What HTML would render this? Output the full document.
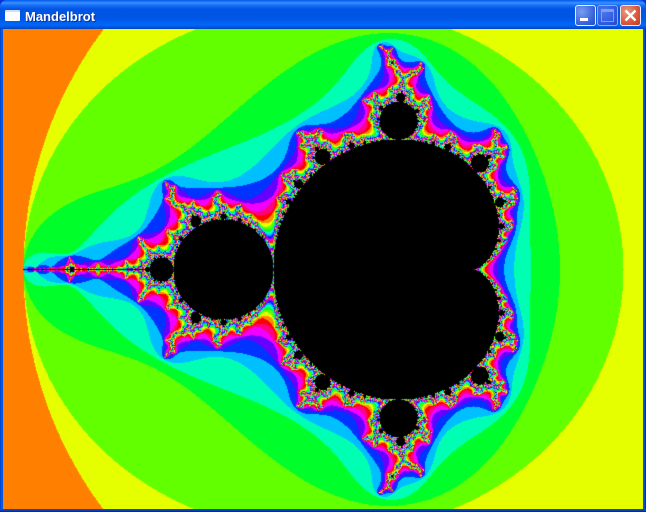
<!DOCTYPE html>
<html>
<head>
<meta charset="utf-8">
<title>Mandelbrot</title>
<style>
html,body{margin:0;padding:0;background:#0831d9;}
#win{position:relative;width:646px;height:512px;overflow:hidden;background:#0831d9;}
#tb{position:absolute;left:0;top:0;width:646px;height:29px;border-radius:7px 7px 0 0;
background:linear-gradient(to bottom,#0058ee 0,#3a93ff 3px,#1a70f5 5px,#0055e5 9px,#0055e5 18px,#0062f5 23px,#0068f8 25px,#0058e0 27px,#0043b8 29px);}
#cv{position:absolute;left:3px;top:29px;width:640px;height:480px;background:#ff8000;display:block;}
#l{position:absolute;left:0;top:29px;width:3px;height:483px;background:linear-gradient(to right,#0040c0,#0a5cf0,#0a50e0);}
#r{position:absolute;right:0;top:29px;width:3px;height:483px;background:linear-gradient(to right,#0a50e0,#0850d8,#002090);}
#b{position:absolute;left:0;top:509px;width:646px;height:3px;background:linear-gradient(to bottom,#0a50e0,#0840c8,#002090);}
#icon{position:absolute;left:5px;top:10px;background:#fff;border-top:2px solid #cfe0ff;box-sizing:border-box;border-radius:1px;width:15px;height:11px;}
#t{position:absolute;left:25px;top:9px;font:bold 13px/15px "Liberation Sans",sans-serif;color:#fff;text-shadow:1px 1px 0 #0a2f9a;white-space:pre;}
.btn{position:absolute;top:5px;width:21px;height:21px;box-sizing:border-box;border:1px solid #e8eeff;border-radius:3px;}
#min{left:575px;background:radial-gradient(circle at 30% 30%,#7a9cf0,#3d68dc 60%,#2448c0);}
#max{left:597px;background:radial-gradient(circle at 30% 30%,#4a78ea,#2f5ce0 60%,#2248c8);border-color:#8fa8ee;}
#cls{left:620px;background:radial-gradient(circle at 30% 30%,#eb9a80,#d8563a 60%,#c03c1c);}
#min i{position:absolute;left:4px;top:12px;width:8px;height:3px;background:#fff;}
#max i{position:absolute;left:3px;top:3px;width:13px;height:13px;box-sizing:border-box;border:1px solid #7f9cf0;border-top:3px solid #7f9cf0;}
#cls svg{position:absolute;left:0;top:0;}
</style>
</head>
<body>
<div id="win">
<div id="tb"></div>
<div id="icon"></div>
<div id="t">Mandelbrot</div>
<div class="btn" id="min"><i></i></div>
<div class="btn" id="max"><i></i></div>
<div class="btn" id="cls"><svg width="19" height="19" viewBox="0 0 19 19"><path d="M4.5 4.5L14.5 14.5M14.5 4.5L4.5 14.5" stroke="#fff" stroke-width="2.4" fill="none"/></svg></div>
<div id="l"></div><div id="r"></div><div id="b"></div>
<canvas id="cv" width="640" height="480"></canvas>
</div>
<script>
(function(){
var c=document.getElementById('cv').getContext('2d');
var im=c.createImageData(640,480),d=im.data;
var MAX=1000;
var H=[30,66,97,130,162,195,228,264,297,330];
function hsv(h){h=((h%360)+360)%360;var s=h/60,i=Math.floor(s),f=s-i,q=255*(1-f),t=255*f;
switch(i){case 0:return[255,t,0];case 1:return[q,255,0];case 2:return[0,255,t];case 3:return[0,q,255];case 4:return[t,0,255];default:return[255,0,q];}}
for(var y=0;y<480;y++){var ci=1.2-y*0.005;
for(var x=0;x<640;x++){var cr=-2.1+x*0.005,zr=0,zi=0,n=0;
while(n<MAX&&zr*zr+zi*zi<=4){var tmp=zr*zr-zi*zi+cr;zi=2*zr*zi+ci;zr=tmp;n++;}
var col;
if(n>=MAX)col=[0,0,0];
else if(n<=10)col=hsv(H[n-1]);
else col=hsv(30+(n-1)*33);
var p=(y*640+x)*4;
d[p]=col[0];d[p+1]=col[1];d[p+2]=col[2];d[p+3]=255;}}
c.putImageData(im,0,0);
})();
</script>
</body>
</html>
